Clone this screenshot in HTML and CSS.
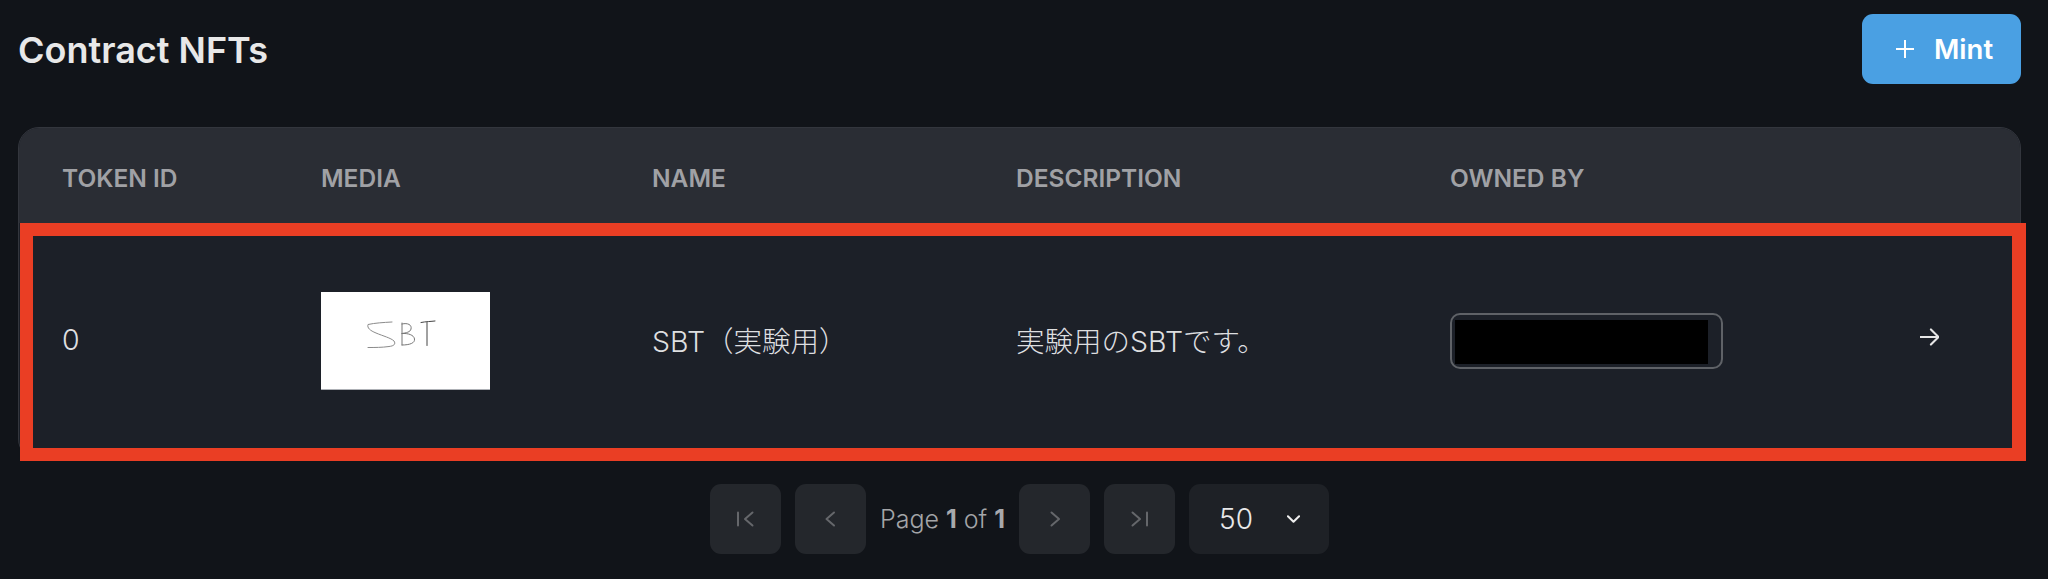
FILE: index.html
```html
<!DOCTYPE html>
<html lang="ja">
<head>
<meta charset="utf-8">
<title>Contract NFTs</title>
<link rel="stylesheet" href="styles.css">
</head>
<body>
<main class="page">
  <header class="top">
    <h1 class="title">Contract NFTs</h1>
    <button class="mint" type="button">
      <svg class="mint-icon" viewBox="0 0 20 20" aria-hidden="true"><path d="M10 1v18M1 10h18"/></svg>
      <span>Mint</span>
    </button>
  </header>

  <div class="table-wrap">
    <table class="nft-table">
      <thead>
        <tr>
          <th class="c-id">TOKEN ID</th>
          <th class="c-media">MEDIA</th>
          <th class="c-name">NAME</th>
          <th class="c-desc">DESCRIPTION</th>
          <th class="c-owner">OWNED BY</th>
          <th class="c-go"></th>
        </tr>
      </thead>
      <tbody>
        <tr>
          <td class="c-id"><span class="lift">0</span></td>
          <td class="c-media">
            <svg class="thumb" viewBox="0 0 169 98" aria-label="SBT">
              <path class="ink-s" d="M71 30C62 30.500 54 31 47 32.500C46 36 49 38.500 55 41C62 44 70 46 73 49C75 52 73 54 68 54.500C61 55.500 54 55.500 47 55.500"/>
              <path class="ink-b" d="M81 31V53M81 32C87 30.500 91 33 90 37C89.500 40 85 41 81 41.500M81 41.500C87 41 93 43 93.500 47C94 51 89 53 81 53"/>
              <path class="ink-t" d="M100 30.500C105 29.500 110 29.500 114 29M106 30.500C106 38 106 46 106 53.500"/>
            </svg>
          </td>
          <td class="c-name"><span class="lift">SBT（実験用）</span></td>
          <td class="c-desc"><span class="lift">実験用のSBTです。</span></td>
          <td class="c-owner">
            <div class="owner"><div class="redacted"></div></div>
          </td>
          <td class="c-go">
            <svg class="arrow" viewBox="0 0 20 18" aria-hidden="true"><path d="M0.500 9H19M11.500 1L19.500 9L11.500 17"/></svg>
          </td>
        </tr>
      </tbody>
    </table>
    <div class="highlight"></div>
  </div>

  <nav class="pager">
    <button class="pg" type="button" aria-label="First">
      <svg viewBox="0 0 26 26"><path d="M6 6.500V19.500M20.500 6.500L13 13L20.500 19.500"/></svg>
    </button>
    <button class="pg" type="button" aria-label="Previous">
      <svg viewBox="0 0 26 26"><path d="M17 6.500L9.500 13L17 19.500"/></svg>
    </button>
    <p class="pg-text">Page <b>1</b> of <b>1</b></p>
    <button class="pg" type="button" aria-label="Next">
      <svg viewBox="0 0 26 26"><path d="M9.500 6.500L17 13L9.500 19.500"/></svg>
    </button>
    <button class="pg" type="button" aria-label="Last">
      <svg viewBox="0 0 26 26"><path d="M5.500 6.500L13 13L5.500 19.500M20 6.500V19.500"/></svg>
    </button>
    <div class="size">
      <span>50</span>
      <svg class="chev" viewBox="0 0 14 10" aria-hidden="true"><path d="M1 2L7 8L13 2"/></svg>
    </div>
  </nav>
</main>
</body>
</html>
```
FILE: styles.css
```css
* { box-sizing: border-box; }

html, body {
  margin: 0;
  height: 100%;
  background: #111419;
  overflow: hidden;
}

body {
  font-family: Inter, "Noto Sans CJK JP", sans-serif;
  color: #dedfe0;
}

.page {
  padding: 14px 27px 0 18px;
}

.top {
  display: flex;
  justify-content: space-between;
  align-items: center;
  height: 70px;
  margin-bottom: 43px;
}

.title {
  margin: 0;
  font-size: 36px;
  font-weight: 600;
  color: #e8e8e8;
  position: relative;
  top: 1px;
}

.mint {
  display: flex;
  align-items: center;
  gap: 19px;
  width: 159px;
  height: 70px;
  padding: 0 0 0 33px;
  border: 0;
  border-radius: 11px;
  background: #4aa0e3;
  color: #fff;
  font: 600 27.500px Inter, sans-serif;
}

.mint-icon {
  width: 20px;
  height: 20px;
  fill: none;
  stroke: #fff;
  stroke-width: 2;
}

.table-wrap {
  position: relative;
  height: 333px;
  border: 1px solid #33363d;
  border-radius: 21px;
  overflow: visible;
  background: #1c2028;
}

.nft-table {
  width: 100%;
  height: 100%;
  border-collapse: separate;
  border-spacing: 0;
  table-layout: fixed;
}

.nft-table th {
  height: 95px;
  padding: 4px 0 0;
  background: #2a2d34;
  color: #a0a1a5;
  font-size: 24.500px;
  font-weight: 600;
  text-align: left;
}

.nft-table th:first-child { border-top-left-radius: 20px; }
.nft-table th:last-child { border-top-right-radius: 20px; }

.nft-table td {
  padding: 0;
  font-size: 28.500px;
  font-weight: 300;
  vertical-align: middle;
}

.lift {
  position: relative;
  top: -2px;
}

.c-id { width: 302px; padding-left: 43px !important; }
.c-media { width: 331px; }
.c-name { width: 364px; }
.c-desc { width: 434px; }
.c-owner { width: 461px; }

.thumb {
  display: block;
  width: 169px;
  height: 98px;
  background: #fff;
  box-shadow: inset 0 -1px #aeb1b6;
}

.ink-s, .ink-b, .ink-t {
  fill: none;
  stroke-width: 1;
  stroke-linecap: round;
}
.ink-s { stroke: #8b8b8b; }
.ink-b { stroke: #777; }
.ink-t { stroke: #444; }

.owner {
  width: 273px;
  height: 56px;
  padding: 5px 13px 3px 3px;
  border: 2px solid #5f6267;
  border-radius: 10px;
}

.redacted {
  height: 100%;
  background: #000;
}

.c-go { text-align: left; }

.arrow {
  display: block;
  width: 19px;
  height: 18px;
  margin: -9px 0 0 9px;
  fill: none;
  stroke: #e6e6e6;
  stroke-width: 2.200;
  stroke-linecap: round;
  stroke-linejoin: round;
}

.highlight {
  position: absolute;
  left: 1px;
  right: -6px;
  top: 95px;
  height: 238px;
  border: solid #ea3e24;
  border-width: 13px 14px 13px 13px;
  pointer-events: none;
}

.pager {
  display: flex;
  justify-content: center;
  align-items: center;
  gap: 14px;
  margin-top: 24px;
}

.pg {
  display: flex;
  align-items: center;
  justify-content: center;
  width: 71px;
  height: 70px;
  padding: 0;
  border: 0;
  border-radius: 11px;
  background: #24272c;
}

.pg svg {
  width: 26px;
  height: 26px;
  fill: none;
  stroke: #65676b;
  stroke-width: 2;
  stroke-linejoin: round;
  stroke-linecap: round;
}

.pg-text {
  margin: 0;
  font-size: 25px;
  font-weight: 300;
  color: #a4a5a8;
  white-space: nowrap;
}

.pg-text b {
  font-weight: 700;
  color: #a8a9ac;
}

.size {
  display: flex;
  align-items: center;
  gap: 34px;
  width: 140px;
  height: 70px;
  padding-left: 30px;
  border-radius: 11px;
  background: #1e2126;
  font-size: 28px;
  font-weight: 300;
  color: #e8e8e9;
}

.chev {
  width: 13px;
  height: 10px;
  fill: none;
  stroke: #eee;
  stroke-width: 2.200;
  stroke-linecap: round;
  stroke-linejoin: round;
}
```
